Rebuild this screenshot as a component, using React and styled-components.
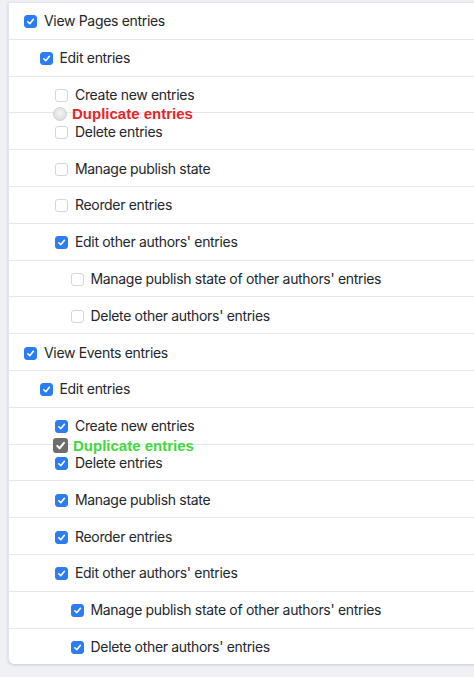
import React from "react";
import styled, { createGlobalStyle } from "styled-components";

const Global = createGlobalStyle`
  html, body {
    margin: 0;
    padding: 0;
    background: #eff1f5;
    overflow: hidden;
  }
  body {
    font-family: Inter, "Noto Sans", "Liberation Sans", sans-serif;
  }
`;

const sections = [
  { name: "Pages", on: false },
  { name: "Events", on: true },
];

function rowsFor(section) {
  const on = section.on;
  return [
    { level: 0, label: `View ${section.name} entries`, checked: true },
    { level: 1, label: "Edit entries", checked: true },
    { level: 2, label: "Create new entries", checked: on, duplicate: true },
    { level: 2, label: "Delete entries", checked: on },
    { level: 2, label: "Manage publish state", checked: on },
    { level: 2, label: "Reorder entries", checked: on },
    { level: 2, label: "Edit other authors' entries", checked: true },
    { level: 3, label: "Manage publish state of other authors' entries", checked: on },
    { level: 3, label: "Delete other authors' entries", checked: on },
  ];
}

export default function App() {
  return (
    <Page>
      <Global />
      <Card>
        {sections.map((section) =>
          rowsFor(section).map((row, i) => (
            <Row key={section.name + i} level={row.level}>
              <Box checked={row.checked}>
                {row.checked && <Tick />}
              </Box>
              <Label>{row.label}</Label>
              {row.duplicate && (
                <Duplicate>
                  {section.on ? <GrayBox><Tick /></GrayBox> : <Radio />}
                  <DupLabel on={section.on}>Duplicate entries</DupLabel>
                </Duplicate>
              )}
            </Row>
          ))
        )}
      </Card>
    </Page>
  );
}

function Tick() {
  return (
    <svg width="9" height="9" viewBox="0 0 10 10">
      <path d="M2 5.3 L4.2 7.5 L8.2 2.6" fill="none" stroke="#fff" strokeWidth="1.8" strokeLinecap="round" strokeLinejoin="round" />
    </svg>
  );
}

const Page = styled.div`
  padding: 2px 0 0 8px;
  height: 677px;
  box-sizing: border-box;
`;

const Card = styled.div`
  background: #fff;
  margin-right: -20px;
  border-left: 1px solid #e3e6ec;
  border-radius: 0 0 6px 6px;
  box-shadow: 0 1px 3px rgba(30, 40, 60, 0.18);
`;

const Row = styled.div`
  position: relative;
  display: flex;
  align-items: center;
  gap: 7px;
  height: 36.8px;
  box-sizing: border-box;
  border-top: 1px solid #e4e6ea;
  padding-left: ${(p) => 15 + p.level * 15.5}px;
`;

const Box = styled.span`
  display: inline-flex;
  align-items: center;
  justify-content: center;
  width: 13px;
  height: 13px;
  box-sizing: border-box;
  border-radius: 3px;
  margin-top: 2px;
  background: ${(p) => (p.checked ? "#2c7cf5" : "#fff")};
  border: 1px solid ${(p) => (p.checked ? "#2c7cf5" : "#d4d6da")};
`;

const Label = styled.span`
  font-size: 14px;
  color: #23262b;
  letter-spacing: -0.32px;
`;

const Duplicate = styled.div`
  position: absolute;
  left: 44px;
  bottom: -10px;
  display: flex;
  align-items: center;
  gap: 5px;
  z-index: 2;
`;

const Radio = styled.span`
  width: 14px;
  height: 14px;
  border-radius: 50%;
  background: radial-gradient(circle at 50% 40%, #f4f4f4, #d6d6d6);
  border: 1px solid #d2d2d2;
  box-sizing: border-box;
`;

const GrayBox = styled.span`
  display: inline-flex;
  align-items: center;
  justify-content: center;
  width: 15px;
  height: 15px;
  border-radius: 3px;
  background: #6d6d6d;
  svg {
    width: 11px;
    height: 11px;
  }
`;

const DupLabel = styled.span`
  font-family: "Liberation Sans", Arial, sans-serif;
  font-weight: 700;
  font-size: 15px;
  color: ${(p) => (p.on ? "#3fd93a" : "#e6262a")};
`;
